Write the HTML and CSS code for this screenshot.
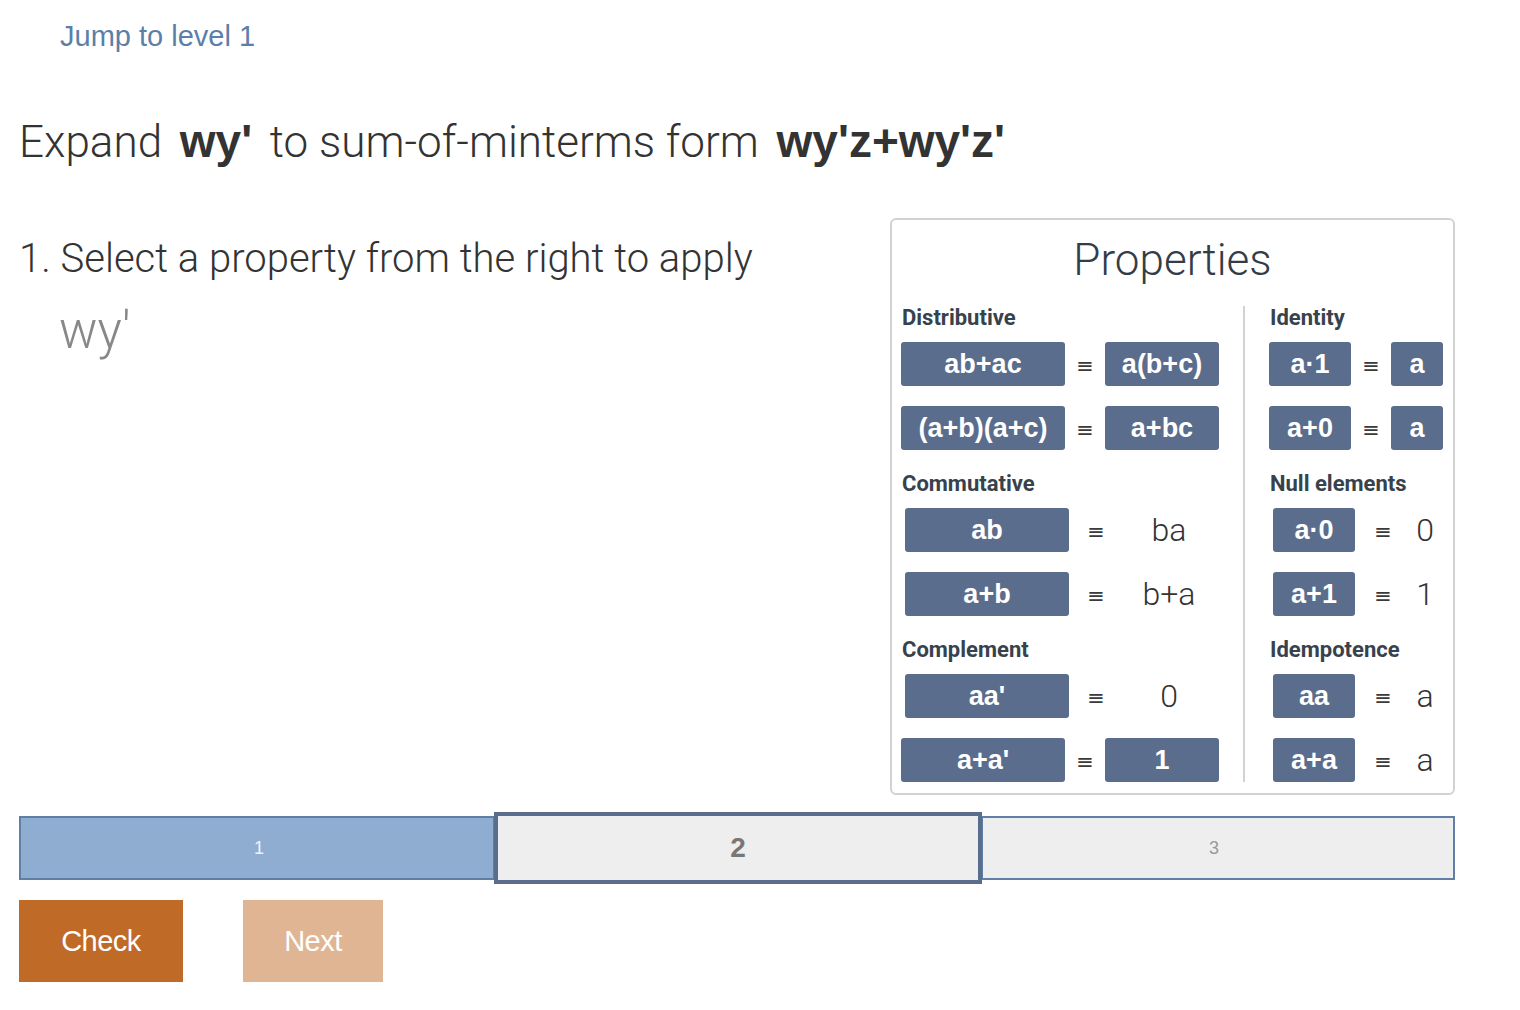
FILE: index.html
```html
<!DOCTYPE html>
<html>
<head>
<meta charset="utf-8">
<link rel="stylesheet" href="styles.css">
</head>
<body>
<div class="page">
  <div class="jump">Jump to level 1</div>
  <h1 class="heading">Expand <b>wy'</b> to sum-of-minterms form <b>wy'z+wy'z'</b></h1>
  <div class="main">
    <div class="work">
      <div class="step">1. Select a property from the right to apply</div>
      <div class="expr">wy'</div>
    </div>
    <div class="panel">
      <div class="title">Properties</div>
      <div class="cols">
        <div class="col left">
          <div class="section">
            <div class="label">Distributive</div>
            <div class="row"><span class="btn w164">ab+ac</span><span class="eq e40">≡</span><span class="btn w114">a(b+c)</span></div>
            <div class="row"><span class="btn w164">(a+b)(a+c)</span><span class="eq e40">≡</span><span class="btn w114">a+bc</span></div>
          </div>
          <div class="section">
            <div class="label">Commutative</div>
            <div class="row shift"><span class="btn w164">ab</span><span class="eq e54">≡</span><span class="res r92">ba</span></div>
            <div class="row shift"><span class="btn w164">a+b</span><span class="eq e54">≡</span><span class="res r92">b+a</span></div>
          </div>
          <div class="section">
            <div class="label">Complement</div>
            <div class="row shift"><span class="btn w164">aa'</span><span class="eq e54">≡</span><span class="res r92">0</span></div>
            <div class="row"><span class="btn w164">a+a'</span><span class="eq e40">≡</span><span class="btn w114">1</span></div>
          </div>
        </div>
        <div class="col right">
          <div class="section">
            <div class="label">Identity</div>
            <div class="row"><span class="btn w82">a·1</span><span class="eq e40">≡</span><span class="btn w52">a</span></div>
            <div class="row"><span class="btn w82">a+0</span><span class="eq e40">≡</span><span class="btn w52">a</span></div>
          </div>
          <div class="section">
            <div class="label">Null elements</div>
            <div class="row shift"><span class="btn w82">a·0</span><span class="eq e56">≡</span><span class="res r28">0</span></div>
            <div class="row shift"><span class="btn w82">a+1</span><span class="eq e56">≡</span><span class="res r28">1</span></div>
          </div>
          <div class="section">
            <div class="label">Idempotence</div>
            <div class="row shift"><span class="btn w82">aa</span><span class="eq e56">≡</span><span class="res r28">a</span></div>
            <div class="row shift"><span class="btn w82">a+a</span><span class="eq e56">≡</span><span class="res r28">a</span></div>
          </div>
        </div>
      </div>
    </div>
  </div>
  <div class="progress">
    <div class="seg done">1</div>
    <div class="seg current">2</div>
    <div class="seg todo">3</div>
  </div>
  <div class="actions">
    <div class="action check">Check</div>
    <div class="action next">Next</div>
  </div>
</div>
</body>
</html>
```

FILE: styles.css
```css
html, body {
  margin: 0;
  padding: 0;
  background: #ffffff;
}
.page {
  width: 1436px;
  padding: 20px 0 0 19px;
  font-family: Roboto, "Liberation Sans", sans-serif;
  color: #333333;
}
.jump {
  margin-left: 41px;
  font-family: "Liberation Sans", Arial, sans-serif;
  font-size: 29px;
  line-height: 32px;
  color: #5b7fa8;
}
.heading {
  margin: 64px 0 0 0;
  height: 52px;
  font-size: 44px;
  line-height: 52px;
  font-weight: 300;
  color: #333333;
}
.heading b {
  font-family: "Liberation Sans", Arial, sans-serif;
  font-size: 46px;
  line-height: 40px;
  font-weight: 700;
  padding: 0 7px;
}
.main {
  display: flex;
  margin-top: 50px;
}
.work {
  flex: 1;
  padding-top: 17px;
}
.step {
  font-size: 40px;
  line-height: 48px;
  font-weight: 300;
  color: #333333;
}
.expr {
  margin: 20px 0 0 40px;
  font-size: 51px;
  line-height: 56px;
  font-weight: 300;
  color: #888888;
}
.panel {
  width: 565px;
  box-sizing: border-box;
  border: 2px solid #d2d2d2;
  border-radius: 6px;
  padding: 14px 10px 11px 10px;
}
.title {
  text-align: center;
  font-size: 44px;
  line-height: 52px;
  font-weight: 300;
  color: #333d47;
  margin-bottom: 20px;
}
.cols {
  display: flex;
}
.col.left {
  width: 318px;
  margin-left: -1px;
}
.col.right {
  margin-left: 24px;
  border-left: 2px solid #d2d2d2;
  padding-left: 24px;
  width: 174px;
}
.section + .section {
  margin-top: 22px;
}
.label {
  font-size: 22px;
  line-height: 24px;
  font-weight: 700;
  color: #37424c;
  margin-bottom: 12px;
  padding-left: 1px;
}
.row {
  display: flex;
  align-items: center;
  height: 44px;
}
.row + .row {
  margin-top: 20px;
}
.row.shift {
  padding-left: 4px;
}
.btn {
  display: flex;
  align-items: center;
  justify-content: center;
  height: 44px;
  background: #5b6d8d;
  border-radius: 3px;
  color: #ffffff;
  font-family: "Liberation Sans", Arial, sans-serif;
  font-weight: 700;
  font-size: 27px;
}
.w164 { width: 164px; }
.w114 { width: 114px; }
.w82 { width: 82px; }
.w52 { width: 52px; }
.eq {
  text-align: center;
  font-family: "DejaVu Sans", sans-serif;
  font-size: 21px;
  color: #3a3a3a;
  padding-top: 3px;
}
.e40 { width: 40px; }
.e54 { width: 54px; }
.e56 { width: 56px; }
.res {
  text-align: center;
  font-size: 32px;
  font-weight: 300;
  color: #333333;
}
.r92 { width: 92px; }
.r28 { width: 28px; }
.progress {
  display: flex;
  margin-top: 21px;
  height: 64px;
}
.seg {
  box-sizing: border-box;
  display: flex;
  align-items: center;
  justify-content: center;
  font-family: "Liberation Sans", Arial, sans-serif;
}
.seg.done {
  width: 476px;
  background: #8eadd0;
  border: 2px solid #5f7fa6;
  color: #eef3f8;
  font-size: 18px;
  padding-left: 4px;
}
.seg.current {
  width: 488px;
  margin: -4px -1px;
  height: 72px;
  background: #eeeeee;
  border: 4px solid #5b6d8d;
  color: #777777;
  font-size: 28px;
  font-weight: 700;
  position: relative;
  z-index: 1;
}
.seg.todo {
  flex: 1;
  background: #eeeeee;
  border: 2px solid #5f7fa6;
  color: #999999;
  font-size: 18px;
  padding-right: 8px;
}
.actions {
  display: flex;
  gap: 60px;
  margin-top: 20px;
}
.action {
  height: 82px;
  display: flex;
  align-items: center;
  justify-content: center;
  color: #ffffff;
  font-family: "Liberation Sans", Arial, sans-serif;
  font-size: 29px;
  letter-spacing: -0.5px;
}
.check {
  width: 164px;
  background: #c06a27;
}
.next {
  width: 140px;
  background: #e0b593;
}
```
